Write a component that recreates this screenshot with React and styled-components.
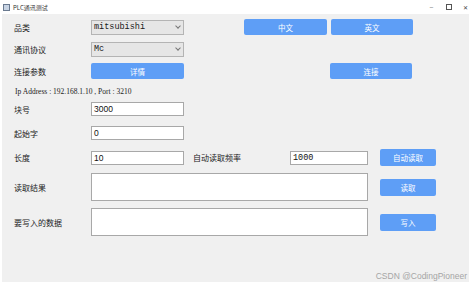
import React from "react";
import styled, { createGlobalStyle } from "styled-components";

const GlobalStyle = createGlobalStyle`
  html, body {
    margin: 0;
    padding: 0;
    background: #ffffff;
  }
  body {
    font-family: "Noto Sans CJK SC", "Liberation Sans", sans-serif;
  }
`;

const CN = `"Noto Sans CJK SC", "Liberation Sans", sans-serif`;

const App = () => {
  return (
    <>
      <GlobalStyle />
      <Screen>
        <TitleBar>
          <TitleIcon />
          <TitleText>PLC通讯测试</TitleText>
          <WinControls>
            <Ctrl>–</Ctrl>
            <Ctrl>
              <MaxBox />
            </Ctrl>
            <Ctrl>✕</Ctrl>
          </WinControls>
        </TitleBar>

        <Body>
          <Row h={16} mt={5}>
            <Label>品类</Label>
            <Select>
              <SelectText>mitsubishi</SelectText>
              <Chevron />
            </Select>
            <Button w={83} ml={60}>中文</Button>
            <Button w={82} ml={4}>英文</Button>
          </Row>

          <Row h={16} mt={6}>
            <Label>通讯协议</Label>
            <Select>
              <SelectText>Mc</SelectText>
              <Chevron />
            </Select>
          </Row>

          <Row h={16} mt={6}>
            <Label>连接参数</Label>
            <Button w={93}>详情</Button>
            <Button w={82} ml={146}>连接</Button>
          </Row>

          <InfoLine>Ip Address : 192.168.1.10 , Port : 3210</InfoLine>

          <Row h={14} mt={5}>
            <Label>块号</Label>
            <Input w={93}>3000</Input>
          </Row>

          <Row h={14} mt={10}>
            <Label>起始字</Label>
            <Input w={93}>0</Input>
          </Row>

          <Row h={17} mt={9}>
            <Label>长度</Label>
            <Input w={93}>10</Input>
            <Label w={97} ml={9}>自动读取频率</Label>
            <Input w={78} mono>1000</Input>
            <Button w={56} ml={12} h={17}>自动读取</Button>
          </Row>

          <Row h={28} mt={7}>
            <Label>读取结果</Label>
            <TextArea />
            <Button w={56} ml={12} h={17}>读取</Button>
          </Row>

          <Row h={28} mt={7}>
            <Label>要写入的数据</Label>
            <TextArea />
            <Button w={56} ml={12} h={17}>写入</Button>
          </Row>
        </Body>
        <Watermark>CSDN @CodingPioneer</Watermark>
      </Screen>
    </>
  );
};

export default App;

const Screen = styled.div`
  position: relative;
  width: 474px;
  height: 285px;
  overflow: hidden;
  background: #ffffff;
`;

const TitleBar = styled.div`
  height: 14px;
  display: flex;
  align-items: center;
  padding-left: 3px;
  background: #ffffff;
`;

const TitleIcon = styled.div`
  width: 5px;
  height: 5px;
  border: 1px solid #6a7a90;
  background: #c8d4e4;
`;

const TitleText = styled.span`
  margin-left: 3px;
  font-family: ${CN};
  font-size: 6px;
  color: #333;
`;

const WinControls = styled.div`
  margin-left: auto;
  display: flex;
  align-items: center;
  height: 14px;
`;

const Ctrl = styled.div`
  width: 17px;
  display: flex;
  justify-content: center;
  align-items: center;
  font-family: "Liberation Sans", sans-serif;
  font-size: 6px;
  color: #444;
`;

const MaxBox = styled.div`
  width: 4px;
  height: 4px;
  border: 1px solid #555;
`;

const Body = styled.div`
  margin: 0 5px 0 2px;
  height: 268px;
  background: #f0f0f0;
  padding-left: 12px;
  box-sizing: border-box;
  overflow: hidden;
`;

const Row = styled.div`
  display: flex;
  align-items: center;
  height: ${(p) => p.h}px;
  margin-top: ${(p) => p.mt || 0}px;
`;

const Label = styled.div`
  flex: none;
  width: ${(p) => p.w || 77}px;
  margin-left: ${(p) => p.ml || 0}px;
  font-family: ${CN};
  font-size: 8px;
  color: #222;
  white-space: nowrap;
`;

const Select = styled.div`
  flex: none;
  width: 93px;
  height: 15px;
  box-sizing: border-box;
  border: 1px solid #b4b4b4;
  background: #e6e6e6;
  display: flex;
  align-items: center;
  padding: 0 3px 0 2px;
`;

const SelectText = styled.span`
  font-family: "Liberation Mono", monospace;
  font-size: 8.5px;
  color: #1a1a1a;
`;

const Chevron = styled.span`
  margin-left: auto;
  width: 3px;
  height: 3px;
  border-right: 1px solid #777;
  border-bottom: 1px solid #777;
  transform: translateY(-1px) rotate(45deg);
`;

const Button = styled.div`
  flex: none;
  width: ${(p) => p.w}px;
  height: ${(p) => p.h || 16}px;
  margin-left: ${(p) => p.ml || 0}px;
  border-radius: 2px;
  background: #5e9ef6;
  color: #ffffff;
  font-family: ${CN};
  font-size: 7.5px;
  display: flex;
  align-items: center;
  justify-content: center;
`;

const InfoLine = styled.div`
  height: 12px;
  margin-top: 6px;
  margin-left: 1px;
  display: flex;
  align-items: center;
  font-family: "Liberation Serif", serif;
  font-size: 7.5px;
  color: #222;
  white-space: pre;
`;

const Input = styled.div`
  flex: none;
  width: ${(p) => p.w}px;
  height: 14px;
  box-sizing: border-box;
  border: 1px solid #a8a8a8;
  background: #ffffff;
  display: flex;
  align-items: center;
  padding-left: 2px;
  font-family: ${(p) => (p.mono ? `"Liberation Mono", monospace` : `"Liberation Sans", sans-serif`)};
  font-size: 8.5px;
  color: #111;
`;

const TextArea = styled.div`
  flex: none;
  width: 277px;
  height: 28px;
  box-sizing: border-box;
  border: 1px solid #a8a8a8;
  background: #ffffff;
`;

const Watermark = styled.div`
  position: absolute;
  right: 7px;
  bottom: 4px;
  font-family: "Liberation Sans", sans-serif;
  font-size: 8.5px;
  color: #a5a5a5;
`;
